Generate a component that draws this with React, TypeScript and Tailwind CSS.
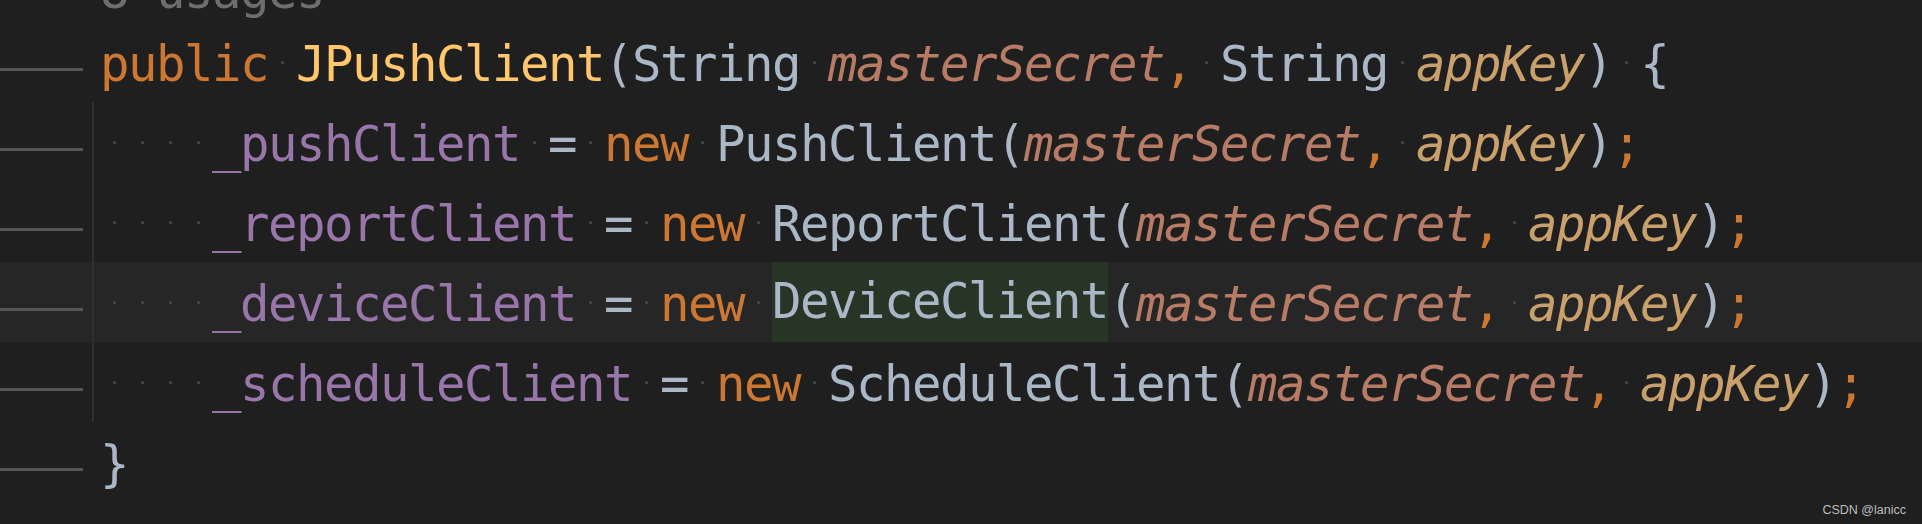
import { FC, ReactNode } from "react";
import clsx from "clsx";

// token colours (Darcula-like)
const kw = "text-[#cc7832]";
const fn = "text-[#ffc66d]";
const tx = "text-[#a9b7c6]";
const fd = "text-[#9876aa]";
const p1 = "text-[#b77b66] italic";
const p2 = "text-[#c99f6b] italic";

type Tok = { t: string; c?: string; hl?: boolean };

const sp: Tok = { t: " " };
const indent: Tok[] = [sp, sp, sp, sp];

const assign = (field: string, cls: string, hl = false): Tok[] => [
  ...indent,
  { t: field, c: fd },
  sp,
  { t: "=", c: tx },
  sp,
  { t: "new", c: kw },
  sp,
  { t: cls, c: tx, hl },
  { t: "(", c: tx },
  { t: "masterSecret", c: p1 },
  { t: ",", c: kw },
  sp,
  { t: "appKey", c: p2 },
  { t: ")", c: tx },
  { t: ";", c: kw },
];

const lines: { toks: Tok[]; guide?: boolean; current?: boolean }[] = [
  {
    toks: [
      { t: "public", c: kw },
      sp,
      { t: "JPushClient", c: fn },
      { t: "(", c: tx },
      { t: "String", c: tx },
      sp,
      { t: "masterSecret", c: p1 },
      { t: ",", c: kw },
      sp,
      { t: "String", c: tx },
      sp,
      { t: "appKey", c: p2 },
      { t: ")", c: tx },
      sp,
      { t: "{", c: tx },
    ],
  },
  { toks: assign("_pushClient", "PushClient"), guide: true },
  { toks: assign("_reportClient", "ReportClient"), guide: true },
  { toks: assign("_deviceClient", "DeviceClient", true), guide: true, current: true },
  { toks: assign("_scheduleClient", "ScheduleClient"), guide: true },
  { toks: [{ t: "}", c: tx }] },
];

const Dot = () => (
  <span className="inline-block w-[28px] align-[17px]">
    <span className="flex justify-center">
      <span className="h-[3px] w-[3px] rounded-full bg-[#4a4a4a]" />
    </span>
  </span>
);

const Row: FC<{ current?: boolean; guide?: boolean; children: ReactNode }> = ({
  current,
  guide,
  children,
}) => (
  <div className={clsx("flex h-[80px]", current && "bg-[#262626]")}>
    <div className="flex w-[100px] shrink-0">
      <div className="mt-[46px] h-[3px] w-[83px] bg-[#555555]" />
      {guide && <div className="ml-[9px] w-[2px] bg-[#2f2f2f]" />}
    </div>
    <div className="whitespace-pre leading-[86px]">{children}</div>
  </div>
);

export default function App() {
  return (
    <div className="relative h-[524px] w-full overflow-hidden bg-[#1f1f1f] font-['DejaVu_Sans_Mono','Liberation_Mono',monospace] text-[49px] tracking-[-1.5px]">
      {/* inlay hint, mostly scrolled out of view */}
      <div className="flex h-[22px] pl-[100px]">
        <div className="-mt-[48px] h-[80px] shrink-0 leading-[80px] text-[#6e6e6e]">8 usages</div>
      </div>
      {lines.map((line, i) => (
        <Row key={i} guide={line.guide} current={line.current}>
          {line.toks.map((tok, j) =>
            tok.t === " " ? (
              <Dot key={j} />
            ) : tok.hl ? (
              <span key={j} className={clsx("inline-block bg-[#283426] leading-[80px] align-[3px]", tok.c)}>
                {tok.t}
              </span>
            ) : (
              <span key={j} className={tok.c}>
                {tok.t}
              </span>
            )
          )}
        </Row>
      ))}
      <div className="absolute bottom-[8px] right-[16px] font-['Liberation_Sans',Arial,sans-serif] text-[12.5px] leading-none tracking-normal text-[#bdbdbd]">
        CSDN @lanicc
      </div>
    </div>
  );
}
